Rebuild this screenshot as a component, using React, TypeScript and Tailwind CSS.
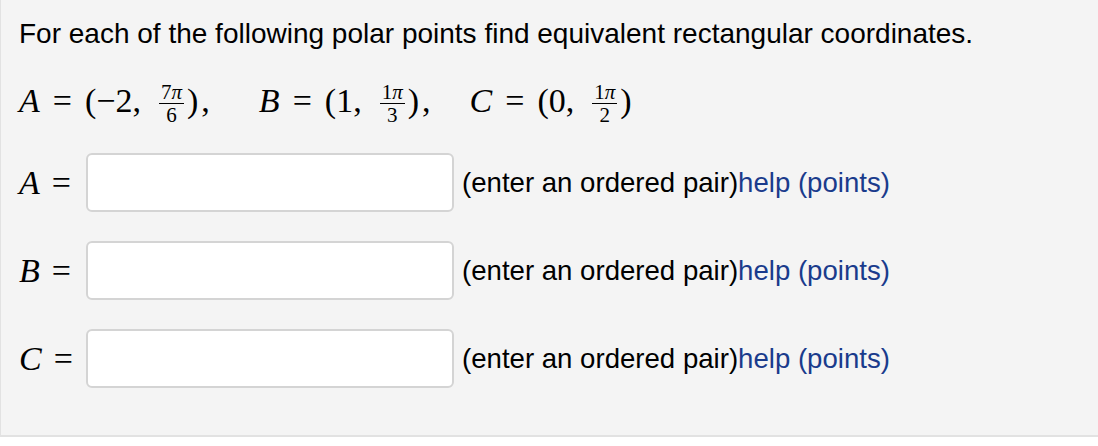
const serif = { fontFamily: '"Liberation Serif", "DejaVu Serif", serif' };

function Frac({ num, den }: { num: React.ReactNode; den: React.ReactNode }) {
  return (
    <span className="inline-flex flex-col items-center align-middle text-[21px] leading-[20px]">
      <span className="px-[2px] pb-[1px]">{num}</span>
      <span className="w-full border-t-[1.5px] border-black px-[2px] pt-[1px] text-center">{den}</span>
    </span>
  );
}

function Point({ name, r, num, den }: { name: string; r: string; num: string; den: string }) {
  return (
    <span className="inline-flex items-center whitespace-nowrap">
      <span className="italic">{name}</span>
      <span className="mx-[13px]">=</span>
      <span>(</span>
      <span>{r},</span>
      <span className="ml-[18px] mr-[3px]">
        <Frac
          num={
            <>
              {num}
              <span className="italic">π</span>
            </>
          }
          den={den}
        />
      </span>
      <span>)</span>
    </span>
  );
}

function AnswerRow({ name }: { name: string }) {
  return (
    <div className="flex h-[88px] items-start">
      <div className="flex h-[59px] w-[85px] items-center text-[34px]" style={serif}>
        <span className="ml-[18px] italic">{name}</span>
        <span className="ml-[12px]">=</span>
      </div>
      <input
        type="text"
        className="h-[59px] w-[368px] rounded-[6px] border-2 border-[#d4d4d4] bg-white"
      />
      <span className="ml-[8px] flex h-[59px] items-center text-[27.6px] text-black">
        (enter an ordered pair)
        <a className="text-[#1a3b8c]" href="#">
          help (points)
        </a>
      </span>
    </div>
  );
}

export default function App() {
  return (
    <div
      className="h-[446px] w-[1098px] bg-white"
      style={{ fontFamily: '"Liberation Sans", Arial, sans-serif' }}
    >
      <div className="h-[437px] border-b-2 border-l border-[#e2e2e2] bg-[#f4f4f4] pt-[19px]">
        <p className="pl-[18px] text-[28px] leading-[30px] text-black">
          For each of the following polar points find equivalent rectangular coordinates.
        </p>
        <div
          className="mt-[29px] flex h-[44px] items-center pl-[18px] text-[34px] text-black"
          style={serif}
        >
          <Point name="A" r="−2" num="7" den="6" />
          <span className="ml-[3px]">,</span>
          <span className="ml-[49px]">
            <Point name="B" r="1" num="1" den="3" />
          </span>
          <span className="ml-[3px]">,</span>
          <span className="ml-[39px]">
            <Point name="C" r="0" num="1" den="2" />
          </span>
        </div>
        <div className="mt-[31px]">
          <AnswerRow name="A" />
          <AnswerRow name="B" />
          <AnswerRow name="C" />
        </div>
      </div>
    </div>
  );
}
